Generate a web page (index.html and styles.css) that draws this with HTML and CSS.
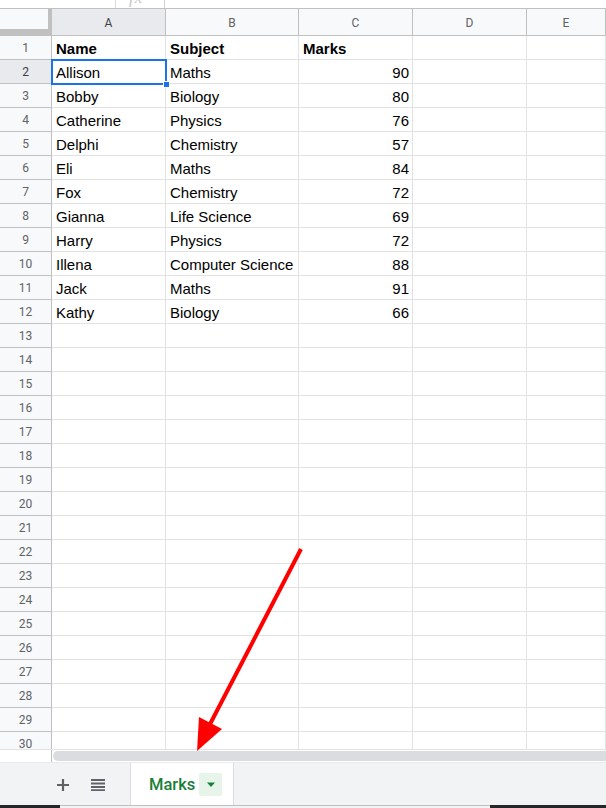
FILE: index.html
```html
<!DOCTYPE html>
<html>
<head>
<meta charset="utf-8">
<link rel="stylesheet" href="styles.css">
</head>
<body>
<div class="app">
  <div class="topbar">
    <div class="fxbox"><span class="fx">fx</span></div>
  </div>
  <div class="sheet">
    <div class="grid">
      <div class="corner"></div>
      <div class="ch sel">A</div>
      <div class="ch">B</div>
      <div class="ch">C</div>
      <div class="ch">D</div>
      <div class="ch">E</div>

      <div class="rh">1</div><div class="c b">Name</div><div class="c b">Subject</div><div class="c b">Marks</div><div class="c"></div><div class="c"></div>
      <div class="rh sel">2</div><div class="c">Allison</div><div class="c">Maths</div><div class="c n">90</div><div class="c"></div><div class="c"></div>
      <div class="rh">3</div><div class="c">Bobby</div><div class="c">Biology</div><div class="c n">80</div><div class="c"></div><div class="c"></div>
      <div class="rh">4</div><div class="c">Catherine</div><div class="c">Physics</div><div class="c n">76</div><div class="c"></div><div class="c"></div>
      <div class="rh">5</div><div class="c">Delphi</div><div class="c">Chemistry</div><div class="c n">57</div><div class="c"></div><div class="c"></div>
      <div class="rh">6</div><div class="c">Eli</div><div class="c">Maths</div><div class="c n">84</div><div class="c"></div><div class="c"></div>
      <div class="rh">7</div><div class="c">Fox</div><div class="c">Chemistry</div><div class="c n">72</div><div class="c"></div><div class="c"></div>
      <div class="rh">8</div><div class="c">Gianna</div><div class="c">Life Science</div><div class="c n">69</div><div class="c"></div><div class="c"></div>
      <div class="rh">9</div><div class="c">Harry</div><div class="c">Physics</div><div class="c n">72</div><div class="c"></div><div class="c"></div>
      <div class="rh">10</div><div class="c">Illena</div><div class="c">Computer Science</div><div class="c n">88</div><div class="c"></div><div class="c"></div>
      <div class="rh">11</div><div class="c">Jack</div><div class="c">Maths</div><div class="c n">91</div><div class="c"></div><div class="c"></div>
      <div class="rh">12</div><div class="c">Kathy</div><div class="c">Biology</div><div class="c n">66</div><div class="c"></div><div class="c"></div>
      <div class="rh">13</div><div class="c"></div><div class="c"></div><div class="c"></div><div class="c"></div><div class="c"></div>
      <div class="rh">14</div><div class="c"></div><div class="c"></div><div class="c"></div><div class="c"></div><div class="c"></div>
      <div class="rh">15</div><div class="c"></div><div class="c"></div><div class="c"></div><div class="c"></div><div class="c"></div>
      <div class="rh">16</div><div class="c"></div><div class="c"></div><div class="c"></div><div class="c"></div><div class="c"></div>
      <div class="rh">17</div><div class="c"></div><div class="c"></div><div class="c"></div><div class="c"></div><div class="c"></div>
      <div class="rh">18</div><div class="c"></div><div class="c"></div><div class="c"></div><div class="c"></div><div class="c"></div>
      <div class="rh">19</div><div class="c"></div><div class="c"></div><div class="c"></div><div class="c"></div><div class="c"></div>
      <div class="rh">20</div><div class="c"></div><div class="c"></div><div class="c"></div><div class="c"></div><div class="c"></div>
      <div class="rh">21</div><div class="c"></div><div class="c"></div><div class="c"></div><div class="c"></div><div class="c"></div>
      <div class="rh">22</div><div class="c"></div><div class="c"></div><div class="c"></div><div class="c"></div><div class="c"></div>
      <div class="rh">23</div><div class="c"></div><div class="c"></div><div class="c"></div><div class="c"></div><div class="c"></div>
      <div class="rh">24</div><div class="c"></div><div class="c"></div><div class="c"></div><div class="c"></div><div class="c"></div>
      <div class="rh">25</div><div class="c"></div><div class="c"></div><div class="c"></div><div class="c"></div><div class="c"></div>
      <div class="rh">26</div><div class="c"></div><div class="c"></div><div class="c"></div><div class="c"></div><div class="c"></div>
      <div class="rh">27</div><div class="c"></div><div class="c"></div><div class="c"></div><div class="c"></div><div class="c"></div>
      <div class="rh">28</div><div class="c"></div><div class="c"></div><div class="c"></div><div class="c"></div><div class="c"></div>
      <div class="rh">29</div><div class="c"></div><div class="c"></div><div class="c"></div><div class="c"></div><div class="c"></div>
      <div class="rh">30</div><div class="c"></div><div class="c"></div><div class="c"></div><div class="c"></div><div class="c"></div>
    </div>
    <div class="selection"><div class="handle"></div></div>
  </div>
  <div class="scrollrow">
    <div class="scrollgutter"></div>
    <div class="scrolltrack"><div class="thumb"></div></div>
  </div>
  <div class="tabbar">
    <div class="tabtools">
      <svg class="icon" width="12" height="12" viewBox="0 0 12 12"><path d="M6 0v12M0 6h12" stroke="#5f6368" stroke-width="2.2" fill="none"/></svg>
      <svg class="icon" width="14" height="12" viewBox="0 0 14 12"><path d="M0 1h14M0 4.5h14M0 8h14M0 11.2h14" stroke="#5f6368" stroke-width="1.8" fill="none"/></svg>
    </div>
    <div class="tab">
      <span class="tabname">Marks</span>
      <span class="tabdrop"><svg width="10" height="6" viewBox="0 0 10 6"><path d="M1 0.5h8L5 5z" fill="#188038"/></svg></span>
    </div>
  </div>
  <div class="bottomstrip"><div class="bs-dark"></div><div class="bs-mid"></div><div class="bs-dark2"></div></div>
  <svg class="arrow" width="606" height="808" viewBox="0 0 606 808">
    <line x1="301" y1="549" x2="208" y2="728" stroke="#ff0000" stroke-width="4"/>
    <polygon points="197,751 199,717 222,729" fill="#ff0000"/>
  </svg>
</div>
</body>
</html>
```

FILE: styles.css
```css
* { box-sizing: border-box; }
html, body { margin: 0; padding: 0; background: #ffffff; }
body { font-family: "Liberation Sans", Arial, sans-serif; width: 606px; height: 808px; overflow: hidden; }
.app { position: relative; width: 606px; height: 808px; display: flex; flex-direction: column; }

.topbar { height: 8px; flex: none; position: relative; overflow: hidden; }
.fxbox { margin-left: 115px; width: 50px; height: 8px; border-left: 1px solid #dadce0; border-right: 1px solid #c6d9c6; overflow: hidden; }
.fx { display: block; margin: -11px 0 0 13px; font: italic 17px/17px "Liberation Serif", serif; color: #c4c7c5; letter-spacing: 1px; }

.sheet { position: relative; height: 741px; flex: none; overflow: hidden; }
.grid {
  display: grid;
  grid-template-columns: 52px 114px 133px 114px 114px 1fr;
  grid-template-rows: 28px;
  grid-auto-rows: 24px;
}
.corner { background: #f8f9fa; border-top: 1px solid #c0c0c0; border-right: 4px solid #c0c0c0; border-bottom: 7px solid #c0c0c0; }
.ch {
  background: #f8f9fa; border-top: 1px solid #c0c0c0; border-right: 1px solid #c0c0c0; border-bottom: 1px solid #c0c0c0;
  display: flex; align-items: center; justify-content: center; padding-top: 1px;
  font-size: 12px; color: #5f6368; font-family: "Roboto", "Liberation Sans", sans-serif;
}
.ch.sel { background: #e8eaed; color: #3c4043; }
.rh {
  background: #f8f9fa; border-right: 1px solid #c0c0c0; border-bottom: 1px solid #c0c0c0;
  display: flex; align-items: center; justify-content: center;
  font-size: 12px; color: #5f6368; font-family: "Roboto", "Liberation Sans", sans-serif;
}
.rh.sel { background: #e8eaed; color: #3c4043; }
.c {
  border-right: 1px solid #e2e2e3; border-bottom: 1px solid #e2e2e3;
  font-size: 15px; line-height: 20px; padding: 3px 3px 0 4px; color: #000;
  white-space: nowrap; overflow: hidden;
}
.c.b { font-weight: bold; }
.c.n { text-align: right; padding-right: 3px; }

.selection { position: absolute; left: 51px; top: 51px; width: 116px; height: 26px; border: 2px solid #1a73e8; pointer-events: none; }
.handle { position: absolute; right: -5px; bottom: -5px; width: 7px; height: 7px; background: #1a73e8; border: 1px solid #ffffff; }

.scrollrow { height: 13px; flex: none; display: flex; border-top: 1px solid #e2e2e3; }
.scrollgutter { width: 52px; border-right: 1px solid #c0c0c0; background: #ffffff; }
.scrolltrack { flex: 1; padding: 1px 0 1px 1px; background: #ffffff; }
.thumb { height: 10px; background: #dadce0; border-radius: 5px 0 0 5px; }

.tabbar { height: 43px; flex: none; background: #f1f3f4; border-top: 1px solid #e8eaed; display: flex; align-items: stretch; }
.tabtools { width: 130px; display: flex; align-items: center; padding-left: 57px; gap: 22px; padding-top: 2px; }
.icon { display: block; }
.tab { width: 104px; background: #ffffff; border-left: 1px solid #dadce0; border-right: 1px solid #dadce0; display: flex; align-items: center; padding-left: 18px; gap: 4px; padding-top: 1px; }
.tabname { font-family: "Roboto", "Liberation Sans", sans-serif; font-size: 16.5px; color: #188038; font-weight: 500; }
.tabdrop { width: 23px; height: 23px; background: #e6f4ea; border-radius: 2px; display: flex; align-items: center; justify-content: center; }
.tabdrop svg { display: block; }

.bottomstrip { height: 3px; flex: none; display: flex; background: #f1f3f4; }
.bs-dark { width: 60px; background: #262626; }
.bs-mid { flex: 1; border-top: 1px solid #c0c0c0; }
.bs-dark2 { width: 116px; background: #262626; }

.arrow { position: absolute; left: 0; top: 0; pointer-events: none; }
```
